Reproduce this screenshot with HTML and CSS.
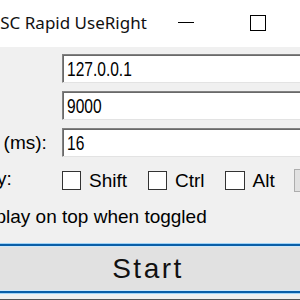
FILE: index.html
```html
<!DOCTYPE html>
<html>
<head>
<meta charset="utf-8">
<link rel="stylesheet" href="styles.css">
</head>
<body>
<div class="window">
  <div class="titlebar">
    <span class="title">OSC Rapid UseRight</span>
    <span class="ctrl min"><span class="dash"></span></span>
    <span class="ctrl max"><span class="square"></span></span>
  </div>
  <div class="form">
    <div class="label">Host:</div>
    <div class="textbox"><span class="val">127.0.0.1</span></div>
    <div class="label">Port:</div>
    <div class="textbox"><span class="val">9000</span></div>
    <div class="label">Interval (ms):</div>
    <div class="textbox"><span class="val">16</span></div>
    <div class="label hk">Hot key:</div>
    <div class="checks">
      <span class="check"><span class="box"></span>Shift</span>
      <span class="check"><span class="box"></span>Ctrl</span>
      <span class="check"><span class="box"></span>Alt</span>
      <span class="setbtn"></span>
    </div>
    <div class="check wide"><span class="box"></span>Display on top when toggled</div>
  </div>
  <div class="start">Start</div>
  <div class="bottom"></div>
</div>
</body>
</html>
```
FILE: styles.css
```css
html, body {
  margin: 0;
  padding: 0;
  width: 300px;
  height: 300px;
  overflow: hidden;
  background: #f0f0f0;
}
.window {
  width: 300px;
  height: 300px;
  overflow: hidden;
  font-family: "Liberation Sans", Arial, sans-serif;
  color: #000;
}
.titlebar {
  height: 47px;
  background: #fff;
  display: flex;
  align-items: center;
  box-sizing: border-box;
  padding-bottom: 2px;
}
.title {
  font-family: "Noto Sans", "Open Sans", sans-serif;
  font-size: 17px;
  margin-left: -13px;
  color: #111;
  width: 191px;
  flex: none;
}
.ctrl {
  display: flex;
  align-items: center;
  justify-content: center;
  flex: none;
}
.min { width: 16px; }
.dash { display: block; width: 16px; height: 1px; background: #000; }
.max { margin-left: 56px; }
.square { display: block; width: 14px; height: 14px; border: 1px solid #000; }
.form {
  display: grid;
  grid-template-columns: 126px 270px;
  margin-left: -64px;
  row-gap: 8px;
  padding-top: 7px;
  align-items: center;
}
.label {
  font-size: 19px;
  white-space: nowrap;
}
.label.hk { margin-left: 6px; }
.textbox {
  height: 29px;
  box-sizing: border-box;
  background: #fff;
  border: 1px solid #828282;
  border-right-color: #e3e3e3;
  border-bottom-color: #e3e3e3;
  box-shadow: inset 1px 1px 0 #696969;
  line-height: 27px;
  padding-left: 4px;
  overflow: hidden;
  white-space: nowrap;
}
.val {
  display: inline-block;
  font-size: 21px;
  transform: scaleX(0.74);
  transform-origin: left center;
}
.checks {
  display: flex;
  align-items: center;
  margin-top: 4px;
}
.check {
  display: flex;
  align-items: center;
  font-size: 19px;
  white-space: nowrap;
  margin-right: 21px;
}
.box {
  width: 17px;
  height: 17px;
  border: 1px solid #333;
  background: #fff;
  margin-right: 8px;
  flex: none;
}
.check:nth-child(3) .box { margin-left: -1px; width: 18px; }
.setbtn {
  width: 30px;
  height: 21px;
  margin-left: -2px;
  background: #e1e1e1;
  border: 1px solid #adadad;
  flex: none;
}
.check.wide {
  grid-column: 1 / 3;
  margin-top: 6px;
  margin-left: 5px;
}
.start {
  margin: 16px -10px 0;
  height: 49px;
  box-sizing: border-box;
  background: #e1e1e1;
  border: 2px solid #0a5fa8;
  box-shadow: 0 0 0 1px #9fd3f7, inset 0 0 0 1px #cde8fb;
  display: flex;
  align-items: center;
  justify-content: center;
  font-size: 28px;
  letter-spacing: 2.5px;
  padding-right: 4px;
  color: #111;
}
.bottom {
  margin-top: 6px;
  height: 10px;
  background: #555;
}
```
